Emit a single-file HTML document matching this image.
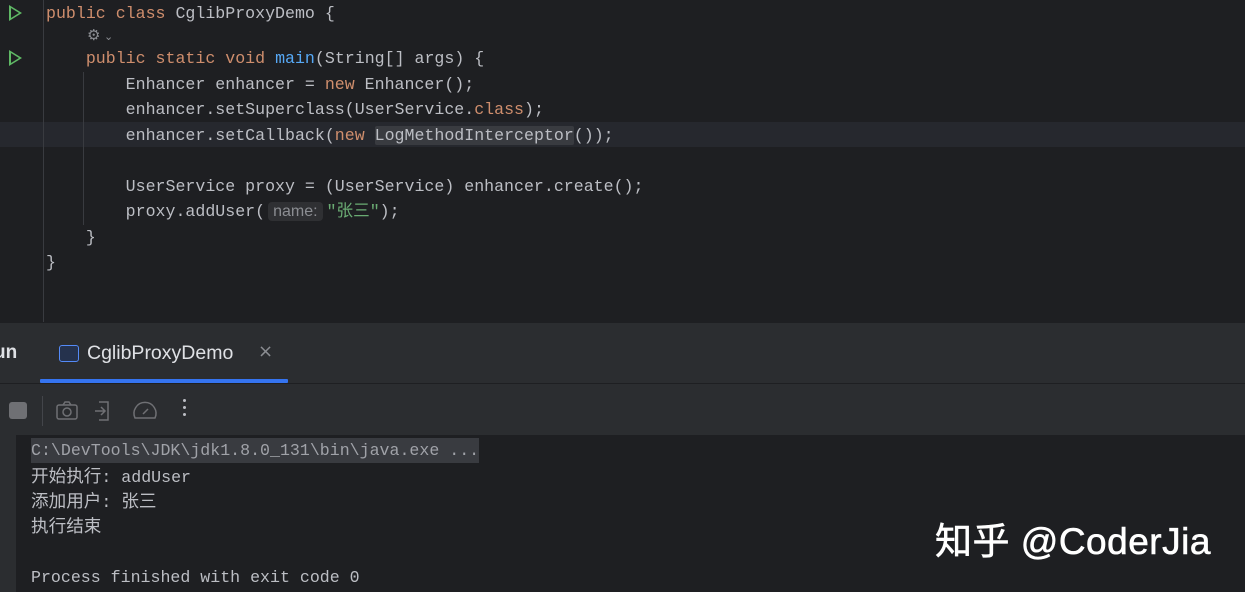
<!DOCTYPE html>
<html><head><meta charset="utf-8"><style>
*{margin:0;padding:0;box-sizing:border-box}
body{width:1245px;height:592px;overflow:hidden;background:#1e1f22;position:relative;font-family:"Liberation Mono","Noto Sans CJK SC",monospace;}
.code{position:absolute;left:0;top:0;width:1245px;height:322px;background:#1e1f22}
.ln{position:absolute;left:46px;font-size:16.6px;color:#bcbec4;white-space:pre;line-height:25px;height:25px}
.k{color:#cf8e6d}.f{color:#56a8f5}.s{color:#6aab73}
.hint{background:#2f3033;color:#8b8d92;border-radius:4px;font-family:"Liberation Sans",sans-serif;font-size:16px;padding:1px 5px;margin:0 4px 0 3px}
.hl{background:#393b40;border-radius:2px}
.run{position:absolute;left:9px;width:0;height:0;border-top:8px solid transparent;border-bottom:8px solid transparent;border-left:13px solid #5fb865}
.run::after{content:"";position:absolute;left:-11px;top:-5px;border-top:5px solid transparent;border-bottom:5px solid transparent;border-left:8px solid #1e1f22}
.panel{position:absolute;left:0;top:322px;width:1245px;height:113px;background:#2b2d30;border-top:1px solid #1e1f22}
.cons{position:absolute;left:0;top:435px;width:1245px;height:157px;background:#1e1f22}
.ct{position:absolute;left:31px;font-size:16.6px;color:#bcbec4;white-space:pre;line-height:25px}
.cj{font-size:17.6px;font-family:"Noto Sans CJK SC",sans-serif}
</style></head><body>
<div class="code">
<div style="position:absolute;left:0;top:122px;width:1245px;height:25px;background:#26282e"></div>
<div style="position:absolute;left:43px;top:0;width:1px;height:322px;background:#393b40"></div>
<div style="position:absolute;left:83px;top:72px;width:1px;height:153px;background:#393b40"></div>
<div class="run" style="top:5px"></div>
<div class="run" style="top:50px"></div>
<div class="ln" style="top:1px"><span class="k">public class</span> CglibProxyDemo {</div>
<div class="ln" style="top:23px;left:87px;font-size:15px;color:#8b8d92;font-family:'DejaVu Sans',sans-serif">⚙<span style="font-size:11px"> ⌄</span></div>
<div class="ln" style="top:46px">    <span class="k">public static void</span> <span class="f">main</span>(String[] args) {</div>
<div class="ln" style="top:72px">        Enhancer enhancer = <span class="k">new</span> Enhancer();</div>
<div class="ln" style="top:97px">        enhancer.setSuperclass(UserService.<span class="k">class</span>);</div>
<div class="ln" style="top:123px">        enhancer.setCallback(<span class="k">new</span> <span class="hl">LogMethodInterceptor</span>());</div>
<div class="ln" style="top:174px">        UserService proxy = (UserService) enhancer.create();</div>
<div class="ln" style="top:199px">        proxy.addUser(<span class="hint">name:</span><span class="s">"张三"</span>);</div>
<div class="ln" style="top:225px">    }</div>
<div class="ln" style="top:250px">}</div>
</div>
<div class="panel">
<div style="position:absolute;left:-6px;top:19px;font-family:'Liberation Sans',sans-serif;font-size:19px;color:#dfe1e5;font-weight:bold">un</div>
<div style="position:absolute;left:59px;top:22px;width:20px;height:17px;border:1.5px solid #548af7;border-radius:3px;background:#25324d"></div>
<div style="position:absolute;left:87px;top:19px;font-family:'Liberation Sans',sans-serif;font-size:19.5px;color:#dfe1e5">CglibProxyDemo</div>
<div style="position:absolute;left:258px;top:18px;font-family:'DejaVu Sans',sans-serif;font-size:18px;color:#8b8d92">×</div>
<div style="position:absolute;left:40px;top:56px;width:248px;height:4px;background:#3574f0;border-radius:1px"></div>
<div style="position:absolute;left:0;top:60px;width:1245px;height:1px;background:#1e1f22"></div>
<div style="position:absolute;left:9px;top:79px;width:18px;height:17px;background:#6f7074;border-radius:3px"></div>
<div style="position:absolute;left:42px;top:73px;width:1px;height:30px;background:#43454a"></div>
<svg style="position:absolute;left:55px;top:75px" width="140" height="26" fill="none" stroke="#6f7074" stroke-width="1.5">
<rect x="2" y="7" width="20" height="14" rx="2"/><circle cx="12" cy="14" r="4"/><path d="M8 7l2-3h4l2 3"/>
<path d="M44 4h9v18h-9M40 13h10M46 9l4 4-4 4"/>
<path d="M80 20a11 11 0 1 1 20 0z"/><path d="M88 16l5-5"/>
</svg>
<div style="position:absolute;left:183px;top:76px;width:3px;height:3px;background:#bcbec4;border-radius:50%;box-shadow:0 7px 0 #bcbec4,0 14px 0 #bcbec4"></div>
</div>
<div class="cons">
<div style="position:absolute;left:0;top:0;width:16px;height:157px;background:#2b2d30"></div>
<div class="ct" style="top:3px;background:#393b40;color:#a0a2a8">C:\DevTools\JDK\jdk1.8.0_131\bin\java.exe ...</div>
<div class="ct" style="top:28px"><span class="cj">开始执行</span>: addUser</div>
<div class="ct" style="top:53px"><span class="cj">添加用户</span>: <span class="cj">张三</span></div>
<div class="ct" style="top:78px"><span class="cj">执行结束</span></div>
<div class="ct" style="top:130px">Process finished with exit code 0</div>
<div style="position:absolute;left:935px;top:76px;font-family:'Liberation Sans','Noto Sans CJK SC',sans-serif;font-size:37px;color:#fff;white-space:nowrap;-webkit-text-stroke:0.6px #fff;letter-spacing:0.5px">知乎 @CoderJia</div>
</div>
</body></html>
